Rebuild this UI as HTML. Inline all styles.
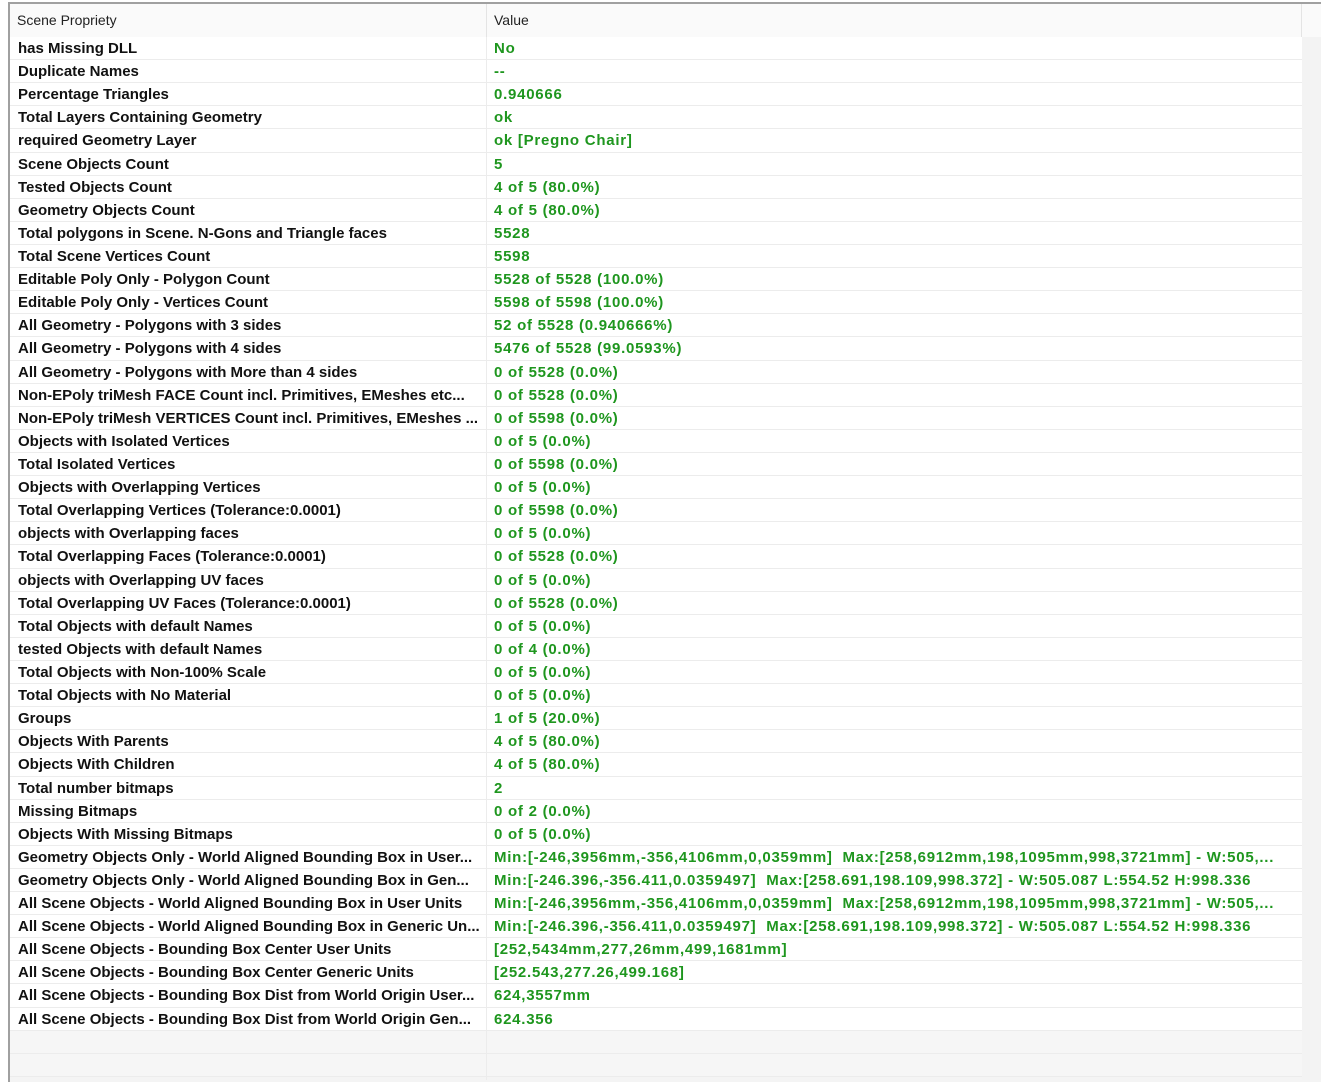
<!DOCTYPE html>
<html><head><meta charset="utf-8"><style>
html,body{margin:0;padding:0;width:1321px;height:1080px;overflow:hidden;background:#fff;font-family:"Liberation Sans",sans-serif;}
.frame{position:absolute;left:8px;top:2px;width:1313px;height:1078px;border-left:2px solid #a0a0a0;border-top:2px solid #a0a0a0;background:#f4f4f4;}
.hdr{position:absolute;left:10px;top:4px;width:1311px;height:33px;background:#fafafa;border-bottom:1px solid #e6e6e6;font-size:14px;color:#222;}
.hdr div{position:absolute;top:8px;}
.hsep{position:absolute;top:0;width:1px;height:33px;background:#e4e4e4;}
.rows{position:absolute;left:10px;top:37px;width:1292px;}
.r{height:22.12px;border-bottom:1px solid #ececec;position:relative;background:#fff;white-space:nowrap;font-size:15px;font-weight:bold;}
.r.e{background:#f6f6f6;}
.a{position:absolute;left:8px;top:3px;width:466px;overflow:hidden;color:#111;}
.b{position:absolute;left:484px;top:3px;color:#1e961e;letter-spacing:0.75px;}
.vl{position:absolute;left:486px;top:37px;width:1px;height:1043px;background:#ececec;}
.sb{position:absolute;left:1302px;top:37px;width:19px;height:1043px;background:#f3f3f3;}
</style></head><body>
<div class="frame"></div>
<div class="hdr"><div style="left:7px">Scene Propriety</div><span class="hsep" style="left:476px"></span><div style="left:484px">Value</div><span class="hsep" style="left:1291px"></span></div>
<div class="sb"></div>
<div class="rows">
<div class="r"><span class="a">has Missing DLL</span><span class="b">No</span></div>
<div class="r"><span class="a">Duplicate Names</span><span class="b">--</span></div>
<div class="r"><span class="a">Percentage Triangles</span><span class="b">0.940666</span></div>
<div class="r"><span class="a">Total Layers Containing Geometry</span><span class="b">ok</span></div>
<div class="r"><span class="a">required Geometry Layer</span><span class="b">ok [Pregno Chair]</span></div>
<div class="r"><span class="a">Scene Objects Count</span><span class="b">5</span></div>
<div class="r"><span class="a">Tested Objects Count</span><span class="b">4 of 5 (80.0%)</span></div>
<div class="r"><span class="a">Geometry Objects Count</span><span class="b">4 of 5 (80.0%)</span></div>
<div class="r"><span class="a">Total polygons in Scene. N-Gons and Triangle faces</span><span class="b">5528</span></div>
<div class="r"><span class="a">Total Scene Vertices Count</span><span class="b">5598</span></div>
<div class="r"><span class="a">Editable Poly Only - Polygon Count</span><span class="b">5528 of 5528 (100.0%)</span></div>
<div class="r"><span class="a">Editable Poly Only - Vertices Count</span><span class="b">5598 of 5598 (100.0%)</span></div>
<div class="r"><span class="a">All Geometry - Polygons with 3 sides</span><span class="b">52 of 5528 (0.940666%)</span></div>
<div class="r"><span class="a">All Geometry - Polygons with 4 sides</span><span class="b">5476 of 5528 (99.0593%)</span></div>
<div class="r"><span class="a">All Geometry - Polygons with More than 4 sides</span><span class="b">0 of 5528 (0.0%)</span></div>
<div class="r"><span class="a">Non-EPoly triMesh FACE Count incl. Primitives, EMeshes etc...</span><span class="b">0 of 5528 (0.0%)</span></div>
<div class="r"><span class="a">Non-EPoly triMesh VERTICES Count incl. Primitives, EMeshes ...</span><span class="b">0 of 5598 (0.0%)</span></div>
<div class="r"><span class="a">Objects with Isolated Vertices</span><span class="b">0 of 5 (0.0%)</span></div>
<div class="r"><span class="a">Total Isolated Vertices</span><span class="b">0 of 5598 (0.0%)</span></div>
<div class="r"><span class="a">Objects with Overlapping Vertices</span><span class="b">0 of 5 (0.0%)</span></div>
<div class="r"><span class="a">Total Overlapping Vertices (Tolerance:0.0001)</span><span class="b">0 of 5598 (0.0%)</span></div>
<div class="r"><span class="a">objects with Overlapping faces</span><span class="b">0 of 5 (0.0%)</span></div>
<div class="r"><span class="a">Total Overlapping Faces (Tolerance:0.0001)</span><span class="b">0 of 5528 (0.0%)</span></div>
<div class="r"><span class="a">objects with Overlapping UV faces</span><span class="b">0 of 5 (0.0%)</span></div>
<div class="r"><span class="a">Total Overlapping UV Faces (Tolerance:0.0001)</span><span class="b">0 of 5528 (0.0%)</span></div>
<div class="r"><span class="a">Total Objects with default Names</span><span class="b">0 of 5 (0.0%)</span></div>
<div class="r"><span class="a">tested Objects with default Names</span><span class="b">0 of 4 (0.0%)</span></div>
<div class="r"><span class="a">Total Objects with Non-100% Scale</span><span class="b">0 of 5 (0.0%)</span></div>
<div class="r"><span class="a">Total Objects with No Material</span><span class="b">0 of 5 (0.0%)</span></div>
<div class="r"><span class="a">Groups</span><span class="b">1 of 5 (20.0%)</span></div>
<div class="r"><span class="a">Objects With Parents</span><span class="b">4 of 5 (80.0%)</span></div>
<div class="r"><span class="a">Objects With Children</span><span class="b">4 of 5 (80.0%)</span></div>
<div class="r"><span class="a">Total number bitmaps</span><span class="b">2</span></div>
<div class="r"><span class="a">Missing Bitmaps</span><span class="b">0 of 2 (0.0%)</span></div>
<div class="r"><span class="a">Objects With Missing Bitmaps</span><span class="b">0 of 5 (0.0%)</span></div>
<div class="r"><span class="a">Geometry Objects Only - World Aligned Bounding Box in User...</span><span class="b">Min:[-246,3956mm,-356,4106mm,0,0359mm]&nbsp; Max:[258,6912mm,198,1095mm,998,3721mm] - W:505,...</span></div>
<div class="r"><span class="a">Geometry Objects Only - World Aligned Bounding Box in Gen...</span><span class="b">Min:[-246.396,-356.411,0.0359497]&nbsp; Max:[258.691,198.109,998.372] - W:505.087 L:554.52 H:998.336</span></div>
<div class="r"><span class="a">All Scene Objects - World Aligned Bounding Box in User Units</span><span class="b">Min:[-246,3956mm,-356,4106mm,0,0359mm]&nbsp; Max:[258,6912mm,198,1095mm,998,3721mm] - W:505,...</span></div>
<div class="r"><span class="a">All Scene Objects - World Aligned Bounding Box in Generic Un...</span><span class="b">Min:[-246.396,-356.411,0.0359497]&nbsp; Max:[258.691,198.109,998.372] - W:505.087 L:554.52 H:998.336</span></div>
<div class="r"><span class="a">All Scene Objects - Bounding Box Center User Units</span><span class="b">[252,5434mm,277,26mm,499,1681mm]</span></div>
<div class="r"><span class="a">All Scene Objects - Bounding Box Center Generic Units</span><span class="b">[252.543,277.26,499.168]</span></div>
<div class="r"><span class="a">All Scene Objects - Bounding Box Dist from World Origin User...</span><span class="b">624,3557mm</span></div>
<div class="r"><span class="a">All Scene Objects - Bounding Box Dist from World Origin Gen...</span><span class="b">624.356</span></div>
<div class="r e"></div>
<div class="r e"></div>
</div>
<div class="vl"></div>
</body></html>
